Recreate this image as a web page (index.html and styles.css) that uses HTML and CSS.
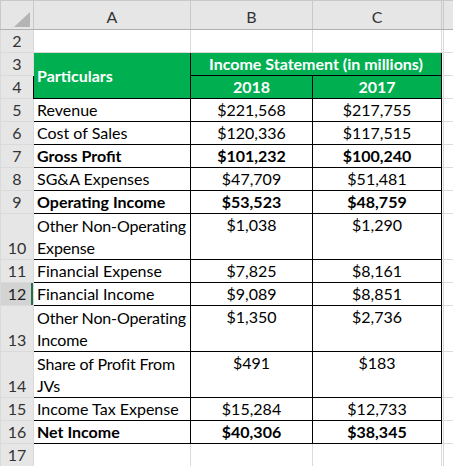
FILE: index.html
```html
<!DOCTYPE html>
<html lang="en">
<head>
  <meta charset="UTF-8">
  <title>Income Statement</title>
  <link rel="stylesheet" href="styles.css">
</head>
<body>
  <table class="sheet">
    <colgroup>
      <col class="col-rh">
      <col class="col-a">
      <col class="col-b">
      <col class="col-c">
      <col class="col-d">
      <col class="col-e">
    </colgroup>
    <tr class="head">
      <th class="corner">
        <svg width="16" height="15" viewBox="0 0 16 15"><polygon points="16,0 16,15 0,15" fill="#b4b4b4"/></svg>
      </th>
      <th>A</th>
      <th>B</th>
      <th>C</th>
      <th class="hidden-col"></th>
      <th></th>
    </tr>
    <tr>
      <th class="rn">2</th>
      <td></td><td></td><td></td><td></td><td></td>
    </tr>
    <tr>
      <th class="rn">3</th>
      <td class="green label" rowspan="2">Particulars</td>
      <td class="green" colspan="2">Income Statement (in millions)</td>
      <td class="edge"></td><td></td>
    </tr>
    <tr>
      <th class="rn">4</th>
      <td class="green">2018</td>
      <td class="green">2017</td>
      <td class="edge"></td><td></td>
    </tr>
    <tr>
      <th class="rn">5</th>
      <td class="item">Revenue</td><td class="num">$221,568</td><td class="num">$217,755</td>
      <td class="edge"></td><td></td>
    </tr>
    <tr>
      <th class="rn">6</th>
      <td class="item">Cost of Sales</td><td class="num">$120,336</td><td class="num">$117,515</td>
      <td class="edge"></td><td></td>
    </tr>
    <tr class="bold">
      <th class="rn">7</th>
      <td class="item">Gross Profit</td><td class="num">$101,232</td><td class="num">$100,240</td>
      <td class="edge"></td><td></td>
    </tr>
    <tr>
      <th class="rn">8</th>
      <td class="item">SG&amp;A Expenses</td><td class="num">$47,709</td><td class="num">$51,481</td>
      <td class="edge"></td><td></td>
    </tr>
    <tr class="bold">
      <th class="rn">9</th>
      <td class="item">Operating Income</td><td class="num">$53,523</td><td class="num">$48,759</td>
      <td class="edge"></td><td></td>
    </tr>
    <tr class="tall">
      <th class="rn">10</th>
      <td class="item wrap">Other Non-Operating Expense</td><td class="num">$1,038</td><td class="num">$1,290</td>
      <td class="edge"></td><td></td>
    </tr>
    <tr>
      <th class="rn">11</th>
      <td class="item">Financial Expense</td><td class="num">$7,825</td><td class="num">$8,161</td>
      <td class="edge"></td><td></td>
    </tr>
    <tr>
      <th class="rn active">12</th>
      <td class="item">Financial Income</td><td class="num">$9,089</td><td class="num">$8,851</td>
      <td class="edge"></td><td></td>
    </tr>
    <tr class="tall">
      <th class="rn">13</th>
      <td class="item wrap">Other Non-Operating Income</td><td class="num">$1,350</td><td class="num">$2,736</td>
      <td class="edge"></td><td></td>
    </tr>
    <tr class="tall">
      <th class="rn">14</th>
      <td class="item wrap">Share of Profit From JVs</td><td class="num">$491</td><td class="num">$183</td>
      <td class="edge"></td><td></td>
    </tr>
    <tr>
      <th class="rn">15</th>
      <td class="item">Income Tax Expense</td><td class="num">$15,284</td><td class="num">$12,733</td>
      <td class="edge"></td><td></td>
    </tr>
    <tr class="bold">
      <th class="rn">16</th>
      <td class="item">Net Income</td><td class="num">$40,306</td><td class="num">$38,345</td>
      <td class="edge"></td><td></td>
    </tr>
    <tr>
      <th class="rn">17</th>
      <td></td><td></td><td></td><td></td><td></td>
    </tr>
  </table>
</body>
</html>
```

FILE: styles.css
```css
body {
  margin: 0;
  background: #fff;
  font-family: Lato, "Open Sans", sans-serif;
  font-size: 16px;
  color: #000;
  overflow: hidden;
}
.sheet {
  border-collapse: collapse;
  table-layout: fixed;
  width: 453px;
}
.col-rh { width: 33px; }
.col-a { width: 157px; }
.col-b { width: 122px; }
.col-c { width: 129px; }
.col-d { width: 2px; }
.col-e { width: 10px; }
.sheet tr {
  height: 23px;
}
.sheet tr.tall {
  height: 46px;
}
.sheet td,
.sheet th {
  padding: 0 3px;
  line-height: 22px;
  border: 1px solid #dadada;
  white-space: nowrap;
  overflow: hidden;
}
.sheet td.wrap {
  white-space: normal;
  line-height: 22px;
  padding-right: 0;
  letter-spacing: -0.15px;
}
.head {
  height: 29px !important;
}
.head th {
  background: #e6e6e6;
  border: 1px solid #c9c9c9;
  border-bottom-color: #b0b0b0;
  color: #333;
  font-weight: normal;
  text-align: center;
  padding: 4px 0 0;
}
.head th.corner {
  text-align: right;
  vertical-align: bottom;
  padding: 0 3px 2px 0;
}
.corner svg {
  display: block;
  margin-left: auto;
}
.head th.hidden-col {
  padding: 0;
  border-left: 1px solid #9a9a9a;
}
.rn {
  background: #e6e6e6;
  border: 1px solid #c9c9c9;
  border-right-color: #b0b0b0;
  color: #333;
  font-weight: normal;
  text-align: center;
  vertical-align: bottom;
  padding: 0;
}
.rn.active {
  background: #d3d3d3;
  color: #222;
  box-shadow: inset -2px 0 0 #217346;
}
.green {
  background: #00b050;
  color: #fff;
  font-weight: bold;
  text-align: center;
  border: 1px solid #000 !important;
}
.green.label {
  text-align: left;
  vertical-align: middle;
}
.item {
  border: 1px solid #000 !important;
  vertical-align: bottom;
}
.num {
  border: 1px solid #000 !important;
  text-align: center;
  vertical-align: top;
}
.bold td {
  font-weight: bold;
}
.edge {
  border-left: 1px solid #000;
}
```
